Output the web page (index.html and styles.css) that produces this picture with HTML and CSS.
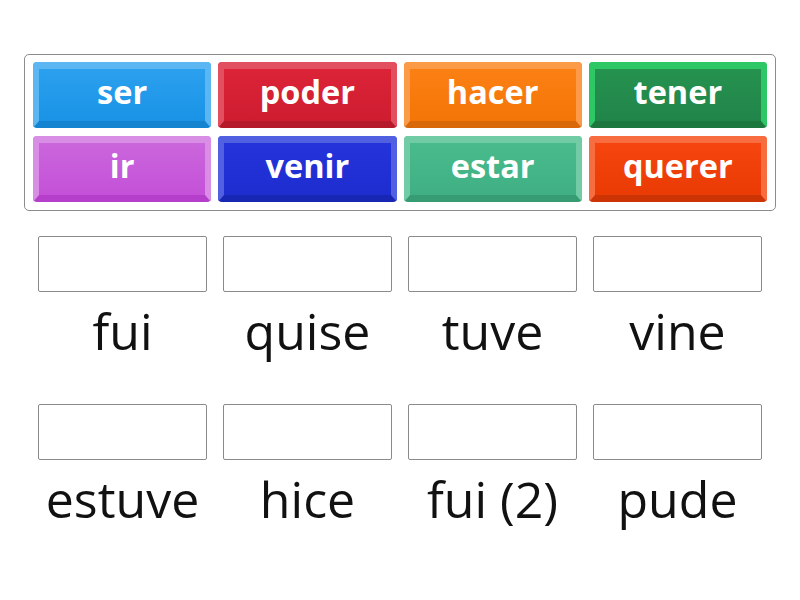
FILE: index.html
```html
<!DOCTYPE html>
<html lang="es">
<head>
<meta charset="utf-8">
<title>Match up</title>
<link rel="stylesheet" href="styles.css">
</head>
<body>
<div class="bank">
  <div class="tile t-ser">ser</div>
  <div class="tile t-poder">poder</div>
  <div class="tile t-hacer">hacer</div>
  <div class="tile t-tener">tener</div>
  <div class="tile t-ir">ir</div>
  <div class="tile t-venir">venir</div>
  <div class="tile t-estar">estar</div>
  <div class="tile t-querer">querer</div>
</div>
<div class="targets">
  <div class="slot"><div class="drop"></div><div class="word">fui</div></div>
  <div class="slot"><div class="drop"></div><div class="word">quise</div></div>
  <div class="slot"><div class="drop"></div><div class="word">tuve</div></div>
  <div class="slot"><div class="drop"></div><div class="word">vine</div></div>
  <div class="slot"><div class="drop"></div><div class="word">estuve</div></div>
  <div class="slot"><div class="drop"></div><div class="word">hice</div></div>
  <div class="slot"><div class="drop"></div><div class="word">fui (2)</div></div>
  <div class="slot"><div class="drop"></div><div class="word">pude</div></div>
</div>
</body>
</html>
```
FILE: styles.css
```css
html, body {
  margin: 0;
  padding: 0;
  background: #fff;
  font-family: "Open Sans", "Noto Sans", sans-serif;
}
.bank {
  box-sizing: border-box;
  margin: 54px 0 0 24px;
  width: 752px;
  border: 1px solid #8c8c8c;
  border-radius: 5px;
  padding: 7px 8px 8px 8px;
  display: grid;
  grid-template-columns: repeat(4, 1fr);
  column-gap: 7px;
  row-gap: 8px;
}
.tile {
  box-sizing: border-box;
  height: 66px;
  border-radius: 4px;
  border-style: solid;
  border-width: 7px 6px 7px 6px;
  border-color: var(--l) var(--l) var(--d) var(--l);
  background: linear-gradient(to bottom, var(--c2), var(--c));
  color: #fff;
  font-weight: 700;
  font-size: 32.5px;
  display: flex;
  align-items: center;
  justify-content: center;
  line-height: 1;
  padding-bottom: 5px;
}
.t-ser { --c: #1a93e6; --c2: #2ba0ee; --l: #5bb6f1; --d: #1483d0; }
.t-poder { --c: #cf1d30; --c2: #dc2338; --l: #e2505f; --d: #b51a2b; }
.t-hacer { --c: #f47508; --c2: #fb8013; --l: #fb9b48; --d: #d9680a; }
.t-tener { --c: #21854a; --c2: #25924f; --l: #2ec765; --d: #1c773f; }
.t-ir { --c: #c451d8; --c2: #cb66dc; --l: #d88ee4; --d: #b53fcb; }
.t-venir { --c: #1d2dcf; --c2: #2434db; --l: #5060e0; --d: #1827b3; }
.t-estar { --c: #40b084; --c2: #48bb8c; --l: #71cca6; --d: #379b73; }
.t-querer { --c: #ea3b05; --c2: #f6450e; --l: #f76d40; --d: #cc3305; }

.targets {
  margin: 25px 0 0 38px;
  width: 724px;
  display: grid;
  grid-template-columns: repeat(4, 169px);
  column-gap: 16px;
  row-gap: 40px;
}
.slot {
  display: flex;
  flex-direction: column;
  align-items: center;
}
.drop {
  box-sizing: border-box;
  width: 169px;
  height: 56px;
  border: 1px solid #8a8a8a;
  border-radius: 2px;
  background: #fff;
}
.word {
  margin-top: 7px;
  font-size: 50px;
  color: #111;
  line-height: 65px;
  white-space: nowrap;
}
```
